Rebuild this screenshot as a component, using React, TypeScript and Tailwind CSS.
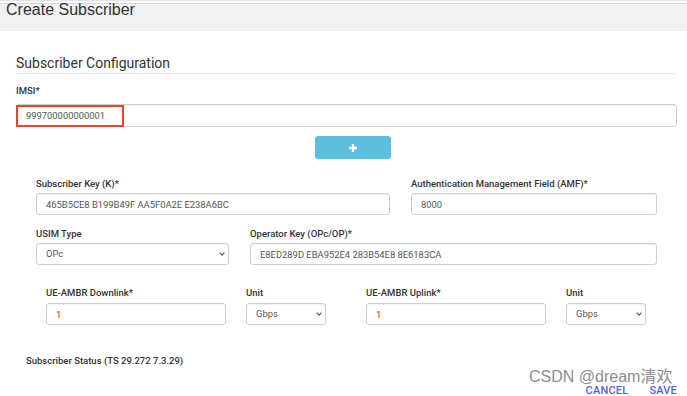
import React from 'react';

const labelCls = "block text-[9.5px] leading-[14px] font-medium text-[#333] whitespace-nowrap";
const inputCls =
  "block w-full h-[22px] px-[9px] border border-[#cfcfcf] rounded-[3px] bg-white text-[9.4px] text-[#555] shadow-[inset_0_1px_1px_rgba(0,0,0,0.06)] outline-none";

const Chevron = () => (
  <svg className="absolute right-[4px] top-1/2 -translate-y-1/2" width="6" height="4" viewBox="0 0 6 4" fill="none">
    <path d="M0.6 0.7 L3 3.1 L5.4 0.7" stroke="#555" strokeWidth="1.1" />
  </svg>
);

type FieldProps = {
  label: string;
  value: string;
  width: string;
  select?: boolean;
  gapCls?: string;
};

const Field = ({ label, value, width, select, gapCls = 'mb-[2px]' }: FieldProps) => (
  <div className={width}>
    <label className={`${labelCls} ${gapCls}`}>{label}</label>
    {select ? (
      <div className="relative">
        <select className={`${inputCls} appearance-none pr-4`} defaultValue={value}>
          <option>{value}</option>
        </select>
        <Chevron />
      </div>
    ) : (
      <input className={inputCls} defaultValue={value} readOnly />
    )}
  </div>
);

export default function App() {
  return (
    <div className="relative w-[687px] h-[396px] overflow-hidden bg-white font-['Roboto',sans-serif] text-[#333]">
      <div className="h-[31px] pt-px pl-[6px] bg-[linear-gradient(to_bottom,#e4e4e4_0,#e4e4e4_1px,#fff_1px,#fff_3px,#d9d9d9_3px,#d9d9d9_4px,#f0f1f3_4px)] font-['Liberation_Sans',Arial,sans-serif] text-[16px] leading-[17px] text-[#333]">
        Create Subscriber
      </div>

      <div className="pl-4 pr-[10px]">
        <h2 className="mt-[24px] pb-px border-b border-[#e6e6e6] text-[14px] leading-[17px] font-normal text-[#333]">
          Subscriber Configuration
        </h2>

        <label className={`${labelCls} mt-[10px] mb-[6px]`}>IMSI*</label>
        <div className="relative">
          <input
            className="block w-full h-[23px] px-[9px] border border-[#cfcfcf] rounded-[3px] bg-white text-[9.4px] text-[#555] shadow-[inset_0_1px_1px_rgba(0,0,0,0.06)] outline-none"
            defaultValue="999700000000001"
            readOnly
          />
          <div className="absolute left-0 top-px w-[108px] h-[22px] border-2 border-[#e8432f]" />
        </div>

        <button className="mt-[9px] ml-[299px] w-[76px] h-[23px] rounded-[3px] bg-[#5bc0de] flex items-center justify-center">
          <svg width="8" height="8" viewBox="0 0 8 8">
            <rect x="2.8" y="0" width="2.4" height="8" fill="#fff" />
            <rect x="0" y="2.8" width="8" height="2.4" fill="#fff" />
          </svg>
        </button>

        <div className="mt-[18px] pl-5 flex gap-[21px]">
          <Field label="Subscriber Key (K)*" value="465B5CE8 B199B49F AA5F0A2E E238A6BC" width="w-[354px]" />
          <Field label="Authentication Management Field (AMF)*" value="8000" width="w-[246px]" />
        </div>

        <div className="mt-[12px] pl-5 flex gap-[21px]">
          <Field label="USIM Type" value="OPc" width="w-[193px]" select />
          <Field label="Operator Key (OPc/OP)*" value="E8ED289D EBA952E4 283B54E8 8E6183CA" width="w-[407px]" />
        </div>

        <div className="mt-[21px] pl-[30px] flex">
          <Field label="UE-AMBR Downlink*" value="1" width="w-[180px]" gapCls="mb-[3px]" />
          <div className="ml-[20px]">
            <Field label="Unit" value="Gbps" width="w-[80px]" select gapCls="mb-[3px]" />
          </div>
          <div className="ml-[40px]">
            <Field label="UE-AMBR Uplink*" value="1" width="w-[180px]" gapCls="mb-[3px]" />
          </div>
          <div className="ml-[20px]">
            <Field label="Unit" value="Gbps" width="w-[80px]" select gapCls="mb-[3px]" />
          </div>
        </div>

        <p className="mt-[29px] pl-[10px] text-[9.5px] leading-[14px] font-medium text-[#333]">
          Subscriber Status (TS 29.272 7.3.29)
        </p>

        <div className="mt-[16px] flex justify-end gap-[21px] text-[11px] leading-[14px] font-medium tracking-[0.2px] text-[#5062e4]">
          <span>CANCEL</span>
          <span>SAVE</span>
        </div>
      </div>

      <div className="absolute left-[529px] top-[369px] text-[16px] leading-[16px] text-[#8c8c8c] font-['Liberation_Sans','Noto_Sans_CJK_SC',sans-serif] whitespace-nowrap pointer-events-none">
        CSDN @dream清欢
      </div>
    </div>
  );
}
